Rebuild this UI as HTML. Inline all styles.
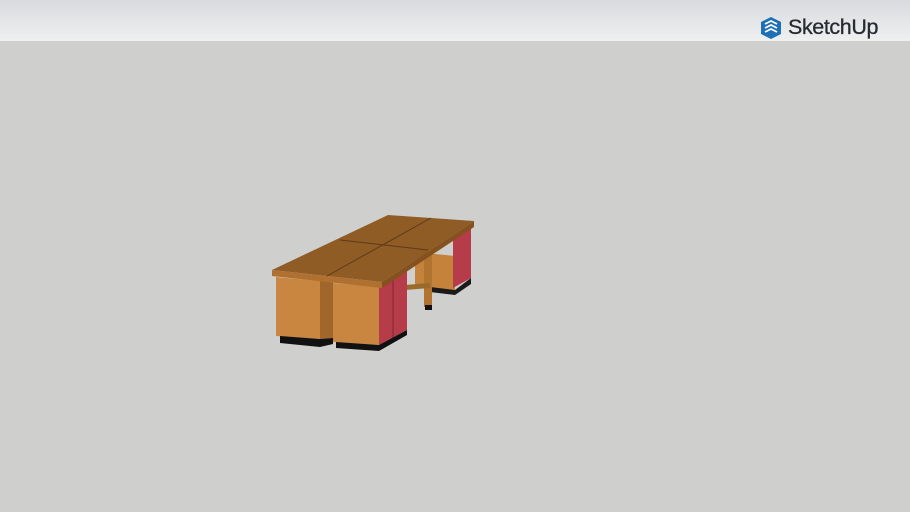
<!DOCTYPE html>
<html><head><meta charset="utf-8"><style>
html,body{margin:0;padding:0;width:910px;height:512px;overflow:hidden;background:#cfcfcd;}
.hdr{position:absolute;left:0;top:0;width:910px;height:41px;background:linear-gradient(#d8dbdd,#eef0f0);}
.logo{position:absolute;left:760px;top:15px;display:flex;align-items:center;}
.logo span{font-family:"Liberation Sans",sans-serif;font-size:21.5px;color:#262b32;margin-left:6px;letter-spacing:-0.4px;-webkit-text-stroke:0.3px #262b32;}
</style></head><body>
<div class="hdr"></div>
<div class="logo">
<svg width="22" height="24" viewBox="0 0 22 24"><path d="M11 1 L21 6 L21 18 L11 23 L1 18 L1 6 Z" fill="#1f6fb5"/><path d="M5 8 L11 5 L17 8 M5 12 L11 9 L17 12 M5 16 L11 13 L17 16" stroke="#fff" stroke-width="1.8" fill="none"/></svg>
<span>SketchUp</span></div>
<svg width="910" height="512" style="position:absolute;left:0;top:0">
<polygon points="415,252 455,256 455,290 415,287" fill="#c4823a"/>
<polygon points="453,236 471,226 471,278 453,288" fill="#b53c48"/>
<polygon points="430,287 455,290 471,278 471,284 455,295 430,292" fill="#1a1a1a"/>
<rect x="424" y="252" width="8" height="55" fill="#b07430"/>
<rect x="425" y="305" width="7" height="5" fill="#111"/>
<polygon points="405,285 430,283 430,288 405,290" fill="#9a6a2a"/>
<polygon points="276,277 320,281 320,339 276,336" fill="#c98640"/>
<polygon points="320,281 333,281 333,338 320,339" fill="#a0662c"/>
<polygon points="280,336 320,339 333,338 333,344 320,347 280,343" fill="#111"/>
<polygon points="333,283 379,287 379,345 333,342" fill="#c98640"/>
<polygon points="379,285 407,271 407,330 379,345" fill="#b53c48"/>
<line x1="393" y1="279" x2="393" y2="338" stroke="#7a2a30" stroke-width="1"/>
<polygon points="336,342 379,345 407,330 407,335 379,351 336,348" fill="#111"/>
<polygon points="272,270 388,215 474,221 382,282" fill="#8f5c26"/>
<polygon points="272,270 382,282 382,288 272,276" fill="#b07030"/>
<polygon points="382,282 474,221 474,227 382,288" fill="#85521f"/>
<line x1="327" y1="276" x2="431" y2="218" stroke="#5e3a16" stroke-width="1"/>
<line x1="340" y1="240" x2="428" y2="250" stroke="#5e3a16" stroke-width="1"/>
</svg>
</body></html>
